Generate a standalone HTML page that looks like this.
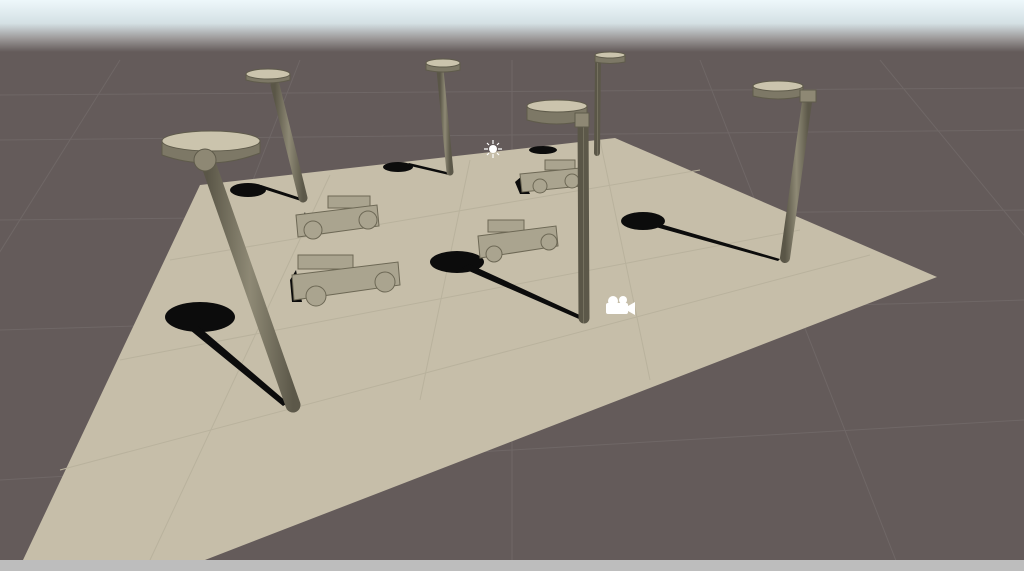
<!DOCTYPE html>
<html><head><style>
html,body{margin:0;padding:0;width:1024px;height:571px;overflow:hidden;background:#645b5a}
</style></head><body>
<svg width="1024" height="571" viewBox="0 0 1024 571" xmlns="http://www.w3.org/2000/svg">
<defs>
<linearGradient id="sky" x1="0" y1="0" x2="0" y2="1">
<stop offset="0" stop-color="#eef8fb"/>
<stop offset="0.45" stop-color="#d4e0e4"/>
<stop offset="0.75" stop-color="#9a9797"/>
<stop offset="1" stop-color="#645b5a"/>
</linearGradient>
<linearGradient id="pole" x1="0" y1="0" x2="1" y2="0">
<stop offset="0" stop-color="#5a5647"/><stop offset="0.5" stop-color="#8e8975"/><stop offset="1" stop-color="#5c5849"/>
</linearGradient>
</defs>
<rect width="1024" height="571" fill="#645b5a"/>
<rect width="1024" height="52" fill="url(#sky)"/>
<g stroke="#6f6766" stroke-width="1" fill="none">
<path d="M0 95 L1024 88 M0 140 L1024 130 M0 220 L1024 210 M0 330 L1024 300 M0 480 L1024 420"/>
<path d="M120 60 L-200 571 M300 60 L100 571 M512 60 L512 571 M700 60 L900 571 M880 60 L1300 571"/>
</g>
<polygon points="23,560 200,185 615,138 937,277 205,560" fill="#c6bea9"/>
<g stroke="#b9b29d" stroke-width="1" fill="none">
<path d="M120 360 L800 230 M60 470 L870 255 M170 260 L700 170"/>
<path d="M330 175 L150 560 M470 160 L420 400 M600 140 L650 380"/>
</g>
<rect x="0" y="560" width="1024" height="11" fill="#bdbdbd"/>
<g fill="#0c0c0c">
<ellipse cx="200" cy="317" rx="35" ry="15"/>
<polygon points="190,330 198,326 288,403 283,406"/>
<ellipse cx="457" cy="262" rx="27" ry="11"/>
<polygon points="462,268 469,264 584,317 579,319"/>
<ellipse cx="643" cy="221" rx="22" ry="9"/>
<polygon points="652,226 657,223 780,259 778,261"/>
<ellipse cx="248" cy="190" rx="18" ry="7"/>
<polygon points="257,187 261,185 304,199 301,201"/>
<ellipse cx="398" cy="167" rx="15" ry="5"/>
<polygon points="406,165 409,163 451,173 449,175"/>
<ellipse cx="543" cy="150" rx="14" ry="4"/>
<polygon points="300,222 305,212 310,236 300,236"/>
<polygon points="290,280 296,270 302,302 292,302"/>
<polygon points="515,182 522,176 530,194 520,194"/>
</g>
<g fill="#aaa48f" stroke="#6d6855" stroke-width="1">
<rect x="328" y="196" width="42" height="12"/>
<polygon points="296,215 377,205 379,226 298,237"/>
<circle cx="313" cy="230" r="9"/><circle cx="368" cy="220" r="9"/>
<rect x="298" y="255" width="55" height="14"/>
<polygon points="292,275 398,262 400,285 294,300"/>
<circle cx="316" cy="296" r="10"/><circle cx="385" cy="282" r="10"/>
<rect x="488" y="220" width="36" height="12"/>
<polygon points="478,236 556,226 558,246 480,258"/>
<circle cx="494" cy="254" r="8"/><circle cx="549" cy="242" r="8"/>
<rect x="545" y="160" width="30" height="10"/>
<polygon points="520,174 580,168 581,186 522,192"/>
<circle cx="540" cy="186" r="7"/><circle cx="572" cy="181" r="7"/>
</g>
<g stroke="url(#pole)" stroke-linecap="round" fill="none">
<line x1="207" y1="160" x2="293" y2="405" stroke-width="15"/>
<line x1="275" y1="85" x2="303" y2="198" stroke-width="9"/>
<line x1="440" y1="70" x2="450" y2="172" stroke-width="7"/>
<line x1="598" y1="60" x2="597" y2="153" stroke-width="6"/>
<line x1="583" y1="120" x2="584" y2="318" stroke-width="11"/>
<line x1="808" y1="95" x2="785" y2="258" stroke-width="10"/>
</g>
<g stroke="#5f5b4b" stroke-width="1">
<path d="M162 143 L162 155 Q210 172 260 153 L260 140 Z" fill="#7d7866"/>
<ellipse cx="211" cy="141" rx="49" ry="10" fill="#cbc4ad"/>
<circle cx="205" cy="160" r="11" fill="#8e8874"/>
<path d="M246 74 L246 80 Q268 86 290 80 L290 74 Z" fill="#7d7866"/>
<ellipse cx="268" cy="74" rx="22" ry="5" fill="#cbc4ad"/>
<path d="M426 63 L426 70 Q443 74 460 70 L460 63 Z" fill="#7d7866"/>
<ellipse cx="443" cy="63" rx="17" ry="4" fill="#cbc4ad"/>
<path d="M595 55 L595 62 Q610 65 625 62 L625 55 Z" fill="#7d7866"/>
<ellipse cx="610" cy="55" rx="15" ry="3" fill="#cbc4ad"/>
<path d="M527 106 L527 120 Q556 128 587 120 L587 106 Z" fill="#7d7866"/>
<ellipse cx="557" cy="106" rx="30" ry="6" fill="#cbc4ad"/>
<rect x="575" y="113" width="14" height="14" fill="#8e8874"/>
<path d="M753 86 L753 96 Q778 102 803 96 L803 86 Z" fill="#7d7866"/>
<ellipse cx="778" cy="86" rx="25" ry="5" fill="#cbc4ad"/>
<rect x="800" y="90" width="16" height="12" fill="#8e8874"/>
</g>
<g fill="#fff">
<circle cx="493" cy="149" r="4"/>
<g stroke="#fff" stroke-width="1.2"><path d="M493 140v4M493 154v4M484 149h4M498 149h4M487 143l2 2M497 153l2 2M499 143l-2 2M487 155l2-2"/></g>
<circle cx="613" cy="301" r="5"/><circle cx="623" cy="300" r="4"/>
<rect x="606" y="303" width="22" height="11" rx="2"/>
<polygon points="628,306 635,302 635,315 628,311"/>
</g>
</svg>
</body></html>
